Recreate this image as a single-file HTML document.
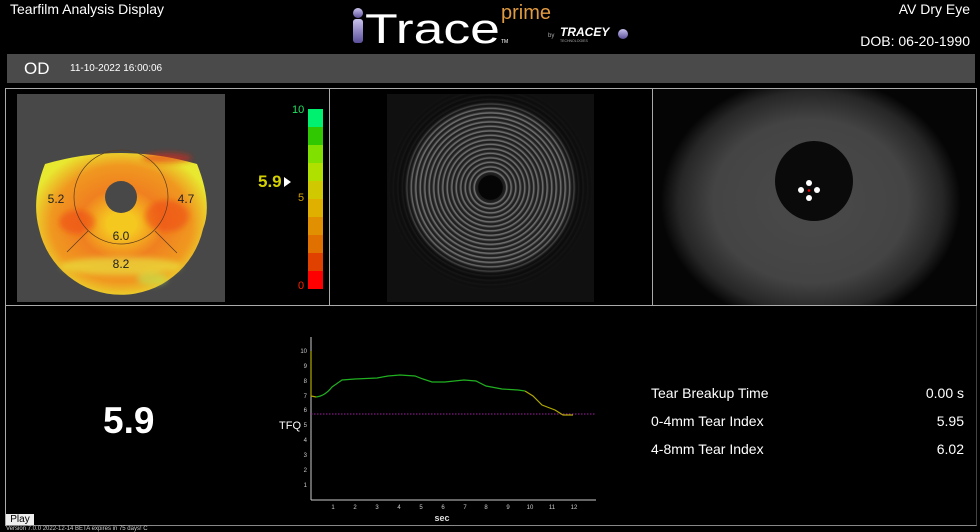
<!DOCTYPE html>
<html><head><meta charset="utf-8"><style>
body{margin:0;width:980px;height:532px;background:#000;overflow:hidden;font-family:"Liberation Sans",sans-serif;color:#fff;position:relative}
.a{position:absolute}
</style></head><body>
<div class="a" style="left:10px;top:1px;font-size:14px">Tearfilm Analysis Display</div>
<div class="a" style="right:10px;top:1px;font-size:14px">AV Dry Eye</div>
<div class="a" style="right:10px;top:33px;font-size:14px">DOB: 06-20-1990</div>
<svg class="a" style="left:345px;top:0" width="290" height="50">
<defs><linearGradient id="lg" x1="0" y1="0" x2="0" y2="1"><stop offset="0" stop-color="#c9c3ee"/><stop offset="1" stop-color="#5a4f9a"/></linearGradient></defs>
<circle cx="13" cy="13" r="5" fill="url(#lg)"/>
<rect x="8" y="19" width="10" height="24" rx="3" fill="url(#lg)"/>
<text x="20" y="43" font-size="42" fill="#fff" font-family="Liberation Sans" textLength="135" lengthAdjust="spacingAndGlyphs">Trace</text>
<text x="156" y="43" font-size="5" fill="#fff">TM</text>
<text x="156" y="19" font-size="20" fill="#e09a40">prime</text>
<text x="203" y="37" font-size="6" fill="#aaa">by</text>
<text x="215" y="36" font-size="12" font-weight="bold" font-style="italic" fill="#fff">TRACEY</text>
<text x="215" y="42" font-size="3.5" fill="#aaa">TECHNOLOGIES</text>
<circle cx="278" cy="34" r="5" fill="url(#lg)"/>
</svg>
<div class="a" style="left:7px;top:54px;width:968px;height:29px;background:#4a4a4a"></div>
<div class="a" style="left:24px;top:59px;font-size:17px">OD</div>
<div class="a" style="left:70px;top:63px;font-size:10px">11-10-2022 16:00:06</div>
<div class="a" style="left:5px;top:88px;width:970px;height:216px;border:1px solid #aaa"></div>
<div class="a" style="left:329px;top:88px;width:1px;height:218px;background:#aaa"></div>
<div class="a" style="left:652px;top:88px;width:1px;height:218px;background:#aaa"></div>
<div class="a" style="left:5px;top:306px;width:970px;height:219px;border-left:1px solid #aaa;border-right:1px solid #444;border-bottom:1px solid #888"></div>
<svg class="a" style="left:17px;top:94px" width="208" height="208">
<defs>
<radialGradient id="hg" cx="0.5" cy="0.5" r="0.55"><stop offset="0.15" stop-color="#f5c820"/><stop offset="0.45" stop-color="#f08020"/><stop offset="0.75" stop-color="#f09820"/><stop offset="1" stop-color="#e8e830"/></radialGradient>
<filter id="bl"><feGaussianBlur stdDeviation="3"/></filter>
</defs>
<rect width="208" height="208" fill="#484848"/>
<path d="M28 70 Q104 48 180 70 Q196 110 186 135 A84 84 0 0 1 22 135 Q14 105 28 70Z" fill="url(#hg)"/>
<g filter="url(#bl)">
<ellipse cx="60" cy="128" rx="18" ry="12" fill="#ef4a18" opacity=".6"/>
<ellipse cx="150" cy="122" rx="22" ry="16" fill="#ef4a18" opacity=".6"/>
<ellipse cx="104" cy="172" rx="60" ry="9" fill="#e8ec40" opacity=".6"/>
<ellipse cx="150" cy="64" rx="25" ry="5" fill="#e82a10" opacity=".6"/>
<ellipse cx="135" cy="185" rx="15" ry="6" fill="#c0e850" opacity=".6"/>
</g>
<circle cx="104" cy="103" r="47" fill="none" stroke="#5a3a20" stroke-width=".7"/>
<line x1="71" y1="137" x2="50" y2="158" stroke="#5a3a20" stroke-width=".7"/>
<line x1="138" y1="137" x2="160" y2="159" stroke="#5a3a20" stroke-width=".7"/>
<circle cx="104" cy="103" r="16" fill="#484848"/>
<g font-size="12" fill="#222" text-anchor="middle"><text x="39" y="109">5.2</text><text x="169" y="109">4.7</text><text x="104" y="146">6.0</text><text x="104" y="174">8.2</text></g>
</svg>
<div class="a" style="left:258px;top:172px;font-size:17px;color:#d4d000;font-weight:bold">5.9</div>
<div class="a" style="left:284px;top:177px;width:0;height:0;border-left:7px solid #fff;border-top:5px solid transparent;border-bottom:5px solid transparent"></div>
<div class="a" style="left:308px;top:109px;width:15px;height:180px;background:linear-gradient(#00f070 0 10%,#30c800 10% 20%,#80e000 20% 30%,#b0e000 30% 40%,#d0c800 40% 50%,#e0b000 50% 60%,#e09000 60% 70%,#e07000 70% 80%,#e04000 80% 90%,#ff0000 90%)"></div>
<div class="a" style="left:292px;top:104px;font-size:11px;color:#20e060">10</div>
<div class="a" style="left:298px;top:192px;font-size:11px;color:#d0a000">5</div>
<div class="a" style="left:298px;top:280px;font-size:11px;color:#ff2000">0</div>
<div class="a" style="left:387px;top:94px;width:207px;height:208px;background:radial-gradient(circle at 50% 45%,#050505 0 12px,transparent 14px),radial-gradient(circle at 50% 45%,transparent 0 78px,rgba(8,8,8,.85) 88px,#101010 105px),repeating-radial-gradient(circle at 50% 45%,#202020 0 1.5px,#7a7a7a 2.5px,#202020 4.5px)"></div>
<div class="a" style="left:653px;top:89px;width:322px;height:216px;background:radial-gradient(ellipse 150px 125px at 49% 52%,#4a4a4a 0,#444 65%,#262626 88%,#050505 100%)"></div>
<div class="a" style="left:775px;top:141px;width:78px;height:80px;border-radius:50%;background:#0a0a0a"></div>
<svg class="a" style="left:795px;top:178px" width="30" height="30"><g fill="#fff"><circle cx="14" cy="5" r="3"/><circle cx="6" cy="12" r="3"/><circle cx="22" cy="12" r="3"/><circle cx="14" cy="20" r="3"/></g><circle cx="14" cy="12.5" r="1.3" fill="#e00"/></svg>
<div class="a" style="left:103px;top:400px;font-size:37px;font-weight:bold">5.9</div>
<svg class="a" style="left:270px;top:330px" width="340" height="200" font-family="Liberation Sans">
<line x1="41" y1="7" x2="41" y2="170" stroke="#ccc"/><line x1="41" y1="170" x2="326" y2="170" stroke="#ccc"/>
<g fill="#ccc" font-size="6" text-anchor="end">
<text x="37" y="23">10</text><text x="37" y="38">9</text><text x="37" y="53">8</text><text x="37" y="68">7</text><text x="37" y="82">6</text><text x="37" y="97">5</text><text x="37" y="112">4</text><text x="37" y="127">3</text><text x="37" y="142">2</text><text x="37" y="157">1</text></g>
<g fill="#ccc" font-size="6" text-anchor="middle">
<text x="63" y="179">1</text><text x="85" y="179">2</text><text x="107" y="179">3</text><text x="129" y="179">4</text><text x="151" y="179">5</text><text x="173" y="179">6</text><text x="195" y="179">7</text><text x="216" y="179">8</text><text x="238" y="179">9</text><text x="260" y="179">10</text><text x="282" y="179">11</text><text x="304" y="179">12</text></g>
<text x="172" y="191" font-size="9" font-weight="bold" fill="#ddd" text-anchor="middle">sec</text>
<text x="9" y="99" font-size="11" fill="#fff">TFQ</text>
<line x1="41" y1="84" x2="326" y2="84" stroke="#a020a0" stroke-dasharray="1.5 1.5"/>
<path d="M41 21 L41 66 L46 67" fill="none" stroke="#b0a800" stroke-width="1.2"/>
<path d="M46 67 Q55 66 62 57 L72 50 L85 49 L107 48 L118 46 L130 45 L145 46 L153 49 L162 52 L175 52 L194 50 L206 51 L216 56 L232 59 L248 60 L255 61" fill="none" stroke="#20b020" stroke-width="1.2"/>
<path d="M255 61 L263 66 L272 75 L285 80 L293 85 L303 85" fill="none" stroke="#b0a800" stroke-width="1.2"/>
</svg>
<div class="a" style="left:651px;top:385px;font-size:14px">Tear Breakup Time</div>
<div class="a" style="left:651px;top:413px;font-size:14px">0-4mm Tear Index</div>
<div class="a" style="left:651px;top:441px;font-size:14px">4-8mm Tear Index</div>
<div class="a" style="right:16px;top:385px;font-size:14px">0.00 s</div>
<div class="a" style="right:16px;top:413px;font-size:14px">5.95</div>
<div class="a" style="right:16px;top:441px;font-size:14px">6.02</div>
<div class="a" style="left:6px;top:514px;width:28px;height:11px;background:#eee;color:#000;font-size:10px;text-align:center;line-height:11px">Play</div>
<div class="a" style="left:6px;top:526px;font-size:6px;color:#ccc">Version 7.0.0 2022-12-14 BETA expires in 75 days! C</div>
</body></html>
